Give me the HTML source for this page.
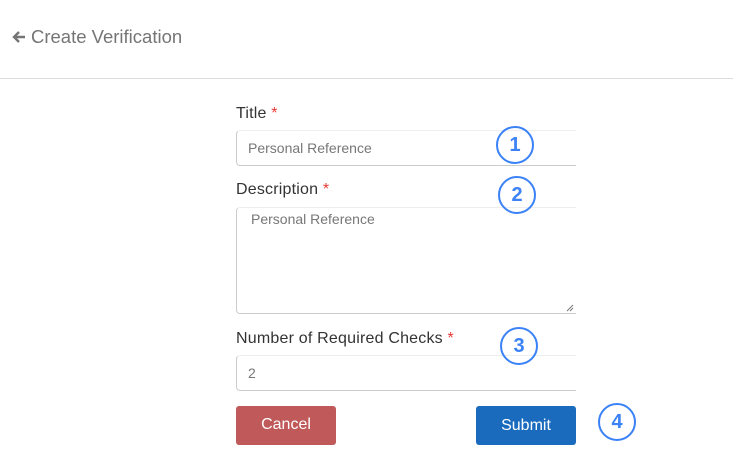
<!DOCTYPE html>
<html><head><style>
body{margin:0;width:733px;height:465px;background:#fff;font-family:"Liberation Sans",sans-serif;position:relative;overflow:hidden}
.a{position:absolute}
.hdr{left:31px;top:26px;font-size:18.5px;color:#757575}
.line{left:0;top:78px;width:733px;height:1px;background:#ddd}
.lbl{font-size:16px;color:#333;left:236px;letter-spacing:0.2px}
.lbl span{color:#e53935}
.inp{left:236px;width:345px;border:1px solid #ccc;border-top-color:#eee;border-right:none;border-radius:4px 0 0 4px;box-sizing:border-box;font-size:14px;color:#777;padding-left:11px}
.btn{height:39px;border-radius:3px;color:#fff;font-size:16px;text-align:center;line-height:37px}
.c{width:34px;height:34px;border:2px solid #3b82f6;border-radius:50%;color:#3b82f6;font-weight:bold;font-size:20px;text-align:center;line-height:35px;box-sizing:content-box}
</style></head><body>
<svg class="a" style="left:11px;top:29px" width="16" height="16"><path d="M14 8H3M8 3L3 8L8 13" stroke="#757575" stroke-width="2.4" fill="none"/></svg>
<div class="a hdr">Create Verification</div>
<div class="a line"></div>
<div class="a lbl" style="top:105px">Title <span>*</span></div>
<div class="a inp" style="top:130px;height:36px;line-height:34px;width:340px">Personal Reference</div>
<div class="a lbl" style="top:181px">Description <span>*</span></div>
<div class="a inp" style="top:207px;height:107px;width:340px;padding:3px 14px">Personal Reference</div>
<svg class="a" style="left:566px;top:304px" width="8" height="8"><path d="M1 7L7 1M4 7L7 4" stroke="#777"/></svg>
<div class="a lbl" style="top:330px">Number of Required Checks <span>*</span></div>
<div class="a inp" style="top:355px;height:36px;line-height:34px;width:340px">2</div>
<div class="a btn" style="left:236px;top:406px;width:100px;background:#c0595a">Cancel</div>
<div class="a btn" style="left:476px;top:406px;width:100px;background:#1a6bbd;line-height:39px">Submit</div>
<div class="a c" style="left:496px;top:126px">1</div>
<div class="a c" style="left:498px;top:176px">2</div>
<div class="a c" style="left:500px;top:327px">3</div>
<div class="a c" style="left:598px;top:403px">4</div>
</body></html>
